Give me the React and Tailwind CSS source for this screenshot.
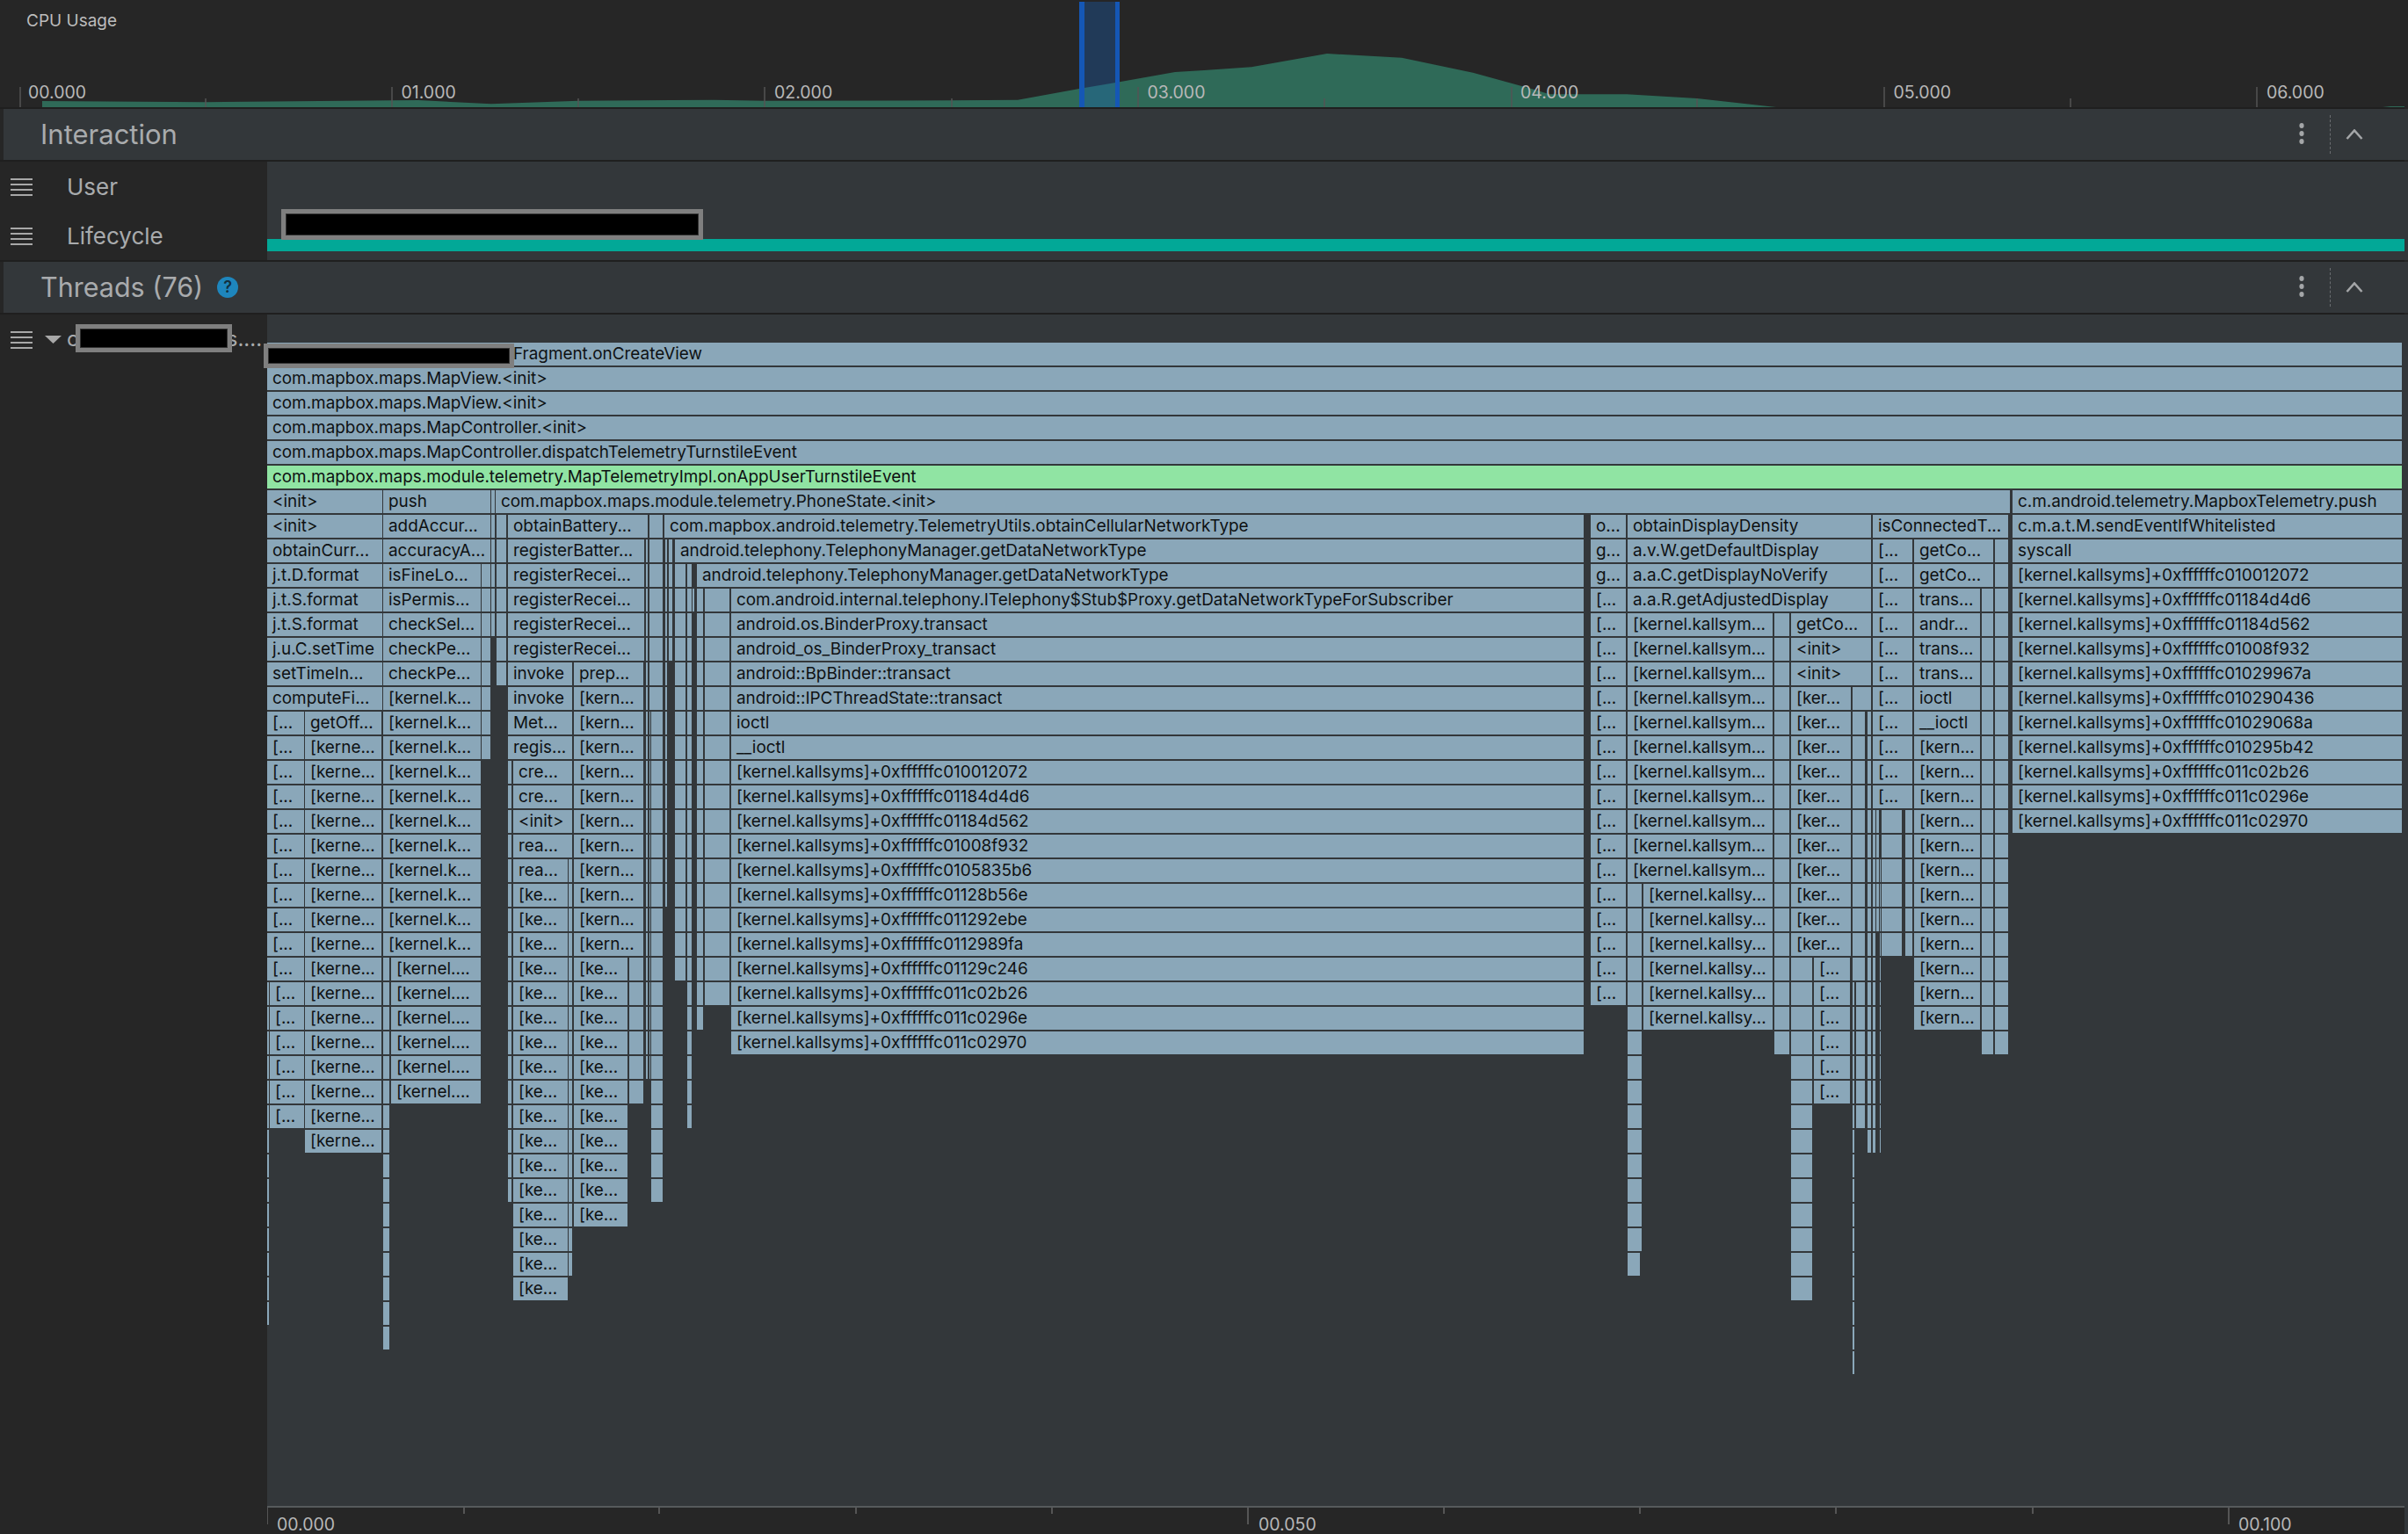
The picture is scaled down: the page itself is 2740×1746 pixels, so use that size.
import React from "react";

const K = (s) => "[kernel.kallsyms]+0xffffffc0" + s;
const rep = (t, n) => Array(n).fill(t);

// [x0, x1, firstRow, lastRow, text (string repeated or array per row)]
const COLS = [
  [304, 2733, 1, 1, "com.mapbox.maps.MapView.<init>"],
  [304, 2733, 2, 2, "com.mapbox.maps.MapView.<init>"],
  [304, 2733, 3, 3, "com.mapbox.maps.MapController.<init>"],
  [304, 2733, 4, 4, "com.mapbox.maps.MapController.dispatchTelemetryTurnstileEvent"],
  // left stacks
  [304, 435, 6, 14, ["<init>", "<init>", "obtainCurr...", "j.t.D.format", "j.t.S.format", "j.t.S.format", "j.u.C.setTime", "setTimeIn...", "computeFi..."]],
  [304, 346, 15, 25, "[..."],
  [304, 306, 26, 39, ""],
  [307, 346, 26, 31, "[..."],
  [347, 434, 15, 32, ["getOff...", ...rep("[kerne...", 17)]],
  [436, 558, 6, 8, ["push", "addAccur...", "accuracyA..."]],
  [436, 547, 9, 24, ["isFineLo...", "isPermis...", "checkSel...", "checkPe...", "checkPe...", ...rep("[kernel.k...", 11)]],
  [548, 558, 9, 16, ""],
  [436, 443, 25, 40, ""],
  [445, 547, 25, 30, "[kernel...."],
  [559, 563, 6, 11, ""],
  [564, 2287, 6, 6, "com.mapbox.maps.module.telemetry.PhoneState.<init>"],
  [565, 576, 7, 13, ""],
  [578, 737, 7, 7, "obtainBattery..."],
  [578, 733, 8, 12, ["registerBatter...", ...rep("registerRecei...", 4)]],
  [578, 651, 13, 16, ["invoke", "invoke", "Met...", "regis..."]],
  [578, 582, 17, 34, ""],
  [584, 651, 17, 20, ["cre...", "cre...", "<init>", "rea..."]],
  [584, 646, 21, 38, ["rea...", ...rep("[ke...", 17)]],
  [647, 651, 21, 37, ""],
  [653, 732, 13, 24, ["prep...", ...rep("[kern...", 11)]],
  [653, 714, 25, 35, "[ke..."],
  [716, 732, 25, 30, ""],
  [735, 737, 8, 29, ""],
  [739, 754, 7, 14, ""],
  [739, 740, 15, 29, ""],
  [741, 754, 15, 34, ""],
  [756, 1802, 7, 7, "com.mapbox.android.telemetry.TelemetryUtils.obtainCellularNetworkType"],
  [757, 759, 8, 22, ""],
  [761, 765, 8, 12, ""],
  [768, 1802, 8, 8, "android.telephony.TelephonyManager.getDataNetworkType"],
  [768, 780, 9, 25, ""],
  [782, 787, 9, 31, ""],
  [793, 1802, 9, 9, "android.telephony.TelephonyManager.getDataNetworkType"],
  [788, 790, 10, 10, ""],
  [793, 800, 10, 27, ""],
  [802, 830, 10, 26, ""],
  [832, 1802, 10, 28, [
    "com.android.internal.telephony.ITelephony$Stub$Proxy.getDataNetworkTypeForSubscriber",
    "android.os.BinderProxy.transact", "android_os_BinderProxy_transact", "android::BpBinder::transact",
    "android::IPCThreadState::transact", "ioctl", "__ioctl",
    K("10012072"), K("1184d4d6"), K("1184d562"), K("1008f932"), K("105835b6"), K("1128b56e"),
    K("11292ebe"), K("112989fa"), K("1129c246"), K("11c02b26"), K("11c0296e"), K("11c02970"),
  ]],
  // middle-right stacks
  [1810, 1850, 7, 26, ["o...", "g...", "g...", ...rep("[...", 17)]],
  [1852, 2129, 7, 10, ["obtainDisplayDensity", "a.v.W.getDefaultDisplay", "a.a.C.getDisplayNoVerify", "a.a.R.getAdjustedDisplay"]],
  [1852, 2017, 11, 21, "[kernel.kallsym..."],
  [1852, 1868, 22, 36, ""],
  [1852, 1866, 37, 37, ""],
  [1870, 2017, 22, 27, "[kernel.kallsy..."],
  [2019, 2036, 11, 28, ""],
  [2038, 2129, 11, 13, ["getCo...", "<init>", "<init>"]],
  [2038, 2106, 14, 24, "[ker..."],
  [2038, 2062, 25, 38, ""],
  [2064, 2105, 25, 30, "[..."],
  [2108, 2129, 14, 14, ""],
  [2108, 2122, 15, 25, ""],
  [2108, 2110, 26, 41, ""],
  [2112, 2122, 26, 31, ""],
  [2125, 2129, 15, 32, ""],
  [2131, 2285, 7, 7, "isConnectedT..."],
  [2131, 2176, 8, 18, "[..."],
  [2131, 2134, 19, 32, ""],
  [2135, 2138, 19, 23, ""],
  [2139, 2140, 21, 32, ""],
  [2141, 2164, 19, 24, ""],
  [2168, 2176, 19, 24, ""],
  [2178, 2268, 8, 9, "getCo..."],
  [2178, 2253, 10, 27, ["trans...", "andr...", "trans...", "trans...", "ioctl", "__ioctl", ...rep("[kern...", 12)]],
  [2255, 2268, 10, 28, ""],
  [2270, 2285, 8, 28, ""],
  [2290, 2733, 6, 19, [
    "c.m.android.telemetry.MapboxTelemetry.push", "c.m.a.t.M.sendEventIfWhitelisted", "syscall",
    K("10012072"), K("1184d4d6"), K("1184d562"), K("1008f932"), K("1029967a"), K("10290436"),
    K("1029068a"), K("10295b42"), K("11c02b26"), K("11c0296e"), K("11c02970"),
  ]],
];

function rowsFromCols() {
  const rows = [];
  for (let r = 0; r <= 41; r++) {
    const items = COLS.filter((c) => c[2] <= r && r <= c[3])
      .map((c) => ({ x0: c[0], x1: c[1], text: Array.isArray(c[4]) ? c[4][r - c[2]] : c[4] }))
      .sort((a, b) => a.x0 - b.x0);
    rows.push(items);
  }
  return rows;
}

const Bar = ({ width, children }) => (
  <div
    style={{ width }}
    className={`h-[26px] shrink-0 overflow-hidden whitespace-nowrap bg-[#8aa7b9] text-[18.9px] leading-[26px] text-[#0e1113] ${children ? "pl-[6px]" : ""}`}
  >
    {children}
  </div>
);

function FlameRow({ items }) {
  let cursor = 304;
  const out = [];
  items.forEach((it, i) => {
    const gap = it.x0 - cursor;
    if (gap > 0) out.push(<div key={"s" + i} style={{ width: gap }} className="shrink-0" />);
    out.push(<Bar key={i} width={it.x1 - it.x0}>{it.text}</Bar>);
    cursor = it.x1;
  });
  return <div className="flex h-[26px]">{out}</div>;
}

const Hamburger = () => (
  <svg width="25" height="21" viewBox="0 0 25 21" className="shrink-0">
    <g stroke="#a8a8a8" strokeWidth="2">
      <path d="M0 2H25" /><path d="M0 8H25" /><path d="M0 14H25" /><path d="M0 20H25" />
    </g>
  </svg>
);

const Redact = ({ className }) => (
  <div className={`absolute border-[5px] border-[#7f7f7f] bg-black shadow-[inset_0_0_0_1px_#333] ${className}`} />
);

const HeaderControls = () => (
  <div className="relative flex h-full items-center">
    <svg width="8" height="28" viewBox="0 0 8 28" className="ml-[2611px] shrink-0">
      <g fill="#a4a6a8">
        <ellipse cx="4" cy="4" rx="2.6" ry="3" /><ellipse cx="4" cy="13" rx="2.6" ry="3" /><ellipse cx="4" cy="22" rx="2.6" ry="3" />
      </g>
    </svg>
    <div className="ml-[28px] h-[44px] w-0 border-l border-dashed border-[#6a6d70]" />
    <svg width="20" height="12" viewBox="0 0 20 12" className="ml-[17px] shrink-0">
      <path d="M1.5 11L10 1.5L18.5 11" fill="none" stroke="#a4a6a8" strokeWidth="2.6" />
    </svg>
  </div>
);

const Sep = () => <div className="h-[2px] w-[2736px] shrink-0 bg-[#1f1f1f]" />;

const AREA = "48,122 48,115 234,116.3 446,114.3 476,114 559,118.3 658,114.7 813,113.7 870,114.7 1083,114.3 1158,113.7 1228,101 1271,93.7 1337,82 1370,80 1424,76.3 1510,61 1595,65.7 1676,82.7 1746,102 1763,107.3 1851,107.3 1931,112 2021,122";
const MAJOR = [23, 446, 870, 1295, 1720, 2144, 2568];
const MINOR = [234, 658, 1083, 1507, 1931, 2356];
const CPU_LABELS = ["00.000", "01.000", "02.000", "03.000", "04.000", "05.000", "06.000"];

const BOTTOM_TICKS = [304, 528, 750, 974, 1197, 1420, 1643, 1866, 2089, 2313, 2536];

export default function App() {
  const rows = rowsFromCols();
  return (
    <div className="relative flex h-[1746px] w-[2740px] flex-col overflow-hidden bg-[#262626] font-['Inter',sans-serif]">
      {/* CPU usage */}
      <div className="relative flex h-[122px] shrink-0 flex-col justify-between">
        <svg width="2740" height="122" viewBox="0 0 2740 122" className="absolute left-0 top-0">
          <polygon points={AREA} fill="#2f6a58" />
          <polygon points="2711,122 2720,121 2736,121 2736,122" fill="#2f6a58" />
          {MAJOR.map((x) => <line key={x} x1={x} x2={x} y1="99" y2="122" stroke="#555" strokeWidth="1.5" />)}
          {MINOR.map((x) => <line key={x} x1={x} x2={x} y1="112" y2="122" stroke="#555" strokeWidth="1.5" />)}
          <rect x="1228" y="2" width="46" height="120" fill="#1b62b8" fillOpacity="0.35" />
          <rect x="1228" y="2" width="6" height="120" fill="#1557b5" />
          <rect x="1269" y="2" width="5" height="120" fill="#1557b5" />
        </svg>
        <div className="relative ml-[30px] mt-[12px] text-[19px] leading-[24px] text-[#bcbcbc]">CPU Usage</div>
        <div className="relative mb-[5px] flex pl-[32px] text-[19.5px] leading-[24px] text-[#b8b8b8]">
          {CPU_LABELS.map((l) => <div key={l} className="w-[424.5px] shrink-0">{l}</div>)}
        </div>
      </div>
      <Sep />

      <div className="relative ml-[4px] h-[58px] shrink-0 bg-[#33373a]">
        <div className="absolute left-[42px] top-0 text-[31px] leading-[58px] text-[#a9abad]">Interaction</div>
        <HeaderControls />
      </div>
      <Sep />

      {/* tracks */}
      <div className="relative flex h-[112px] shrink-0">
        <div className="flex w-[304px] shrink-0 flex-col">
          <div className="flex h-[56px] items-center pl-[12px]">
            <Hamburger />
            <span className="ml-[39px] text-[26px] text-[#a9abad]">User</span>
          </div>
          <div className="flex h-[56px] items-center pl-[12px]">
            <Hamburger />
            <span className="ml-[39px] text-[26px] text-[#a9abad]">Lifecycle</span>
          </div>
        </div>
        <div className="flex w-[2436px] shrink-0 flex-col justify-end bg-[#33373a] pb-[10px]">
          <div className="h-[14px] w-[2432px] bg-[#02a897]" />
        </div>
        <Redact className="left-[320px] top-[54px] h-[35px] w-[480px]" />
      </div>
      <Sep />

      <div className="relative ml-[4px] h-[58px] shrink-0 bg-[#33373a]">
        <div className="absolute left-[42px] top-0 flex items-center text-[30.5px] leading-[58px] text-[#a9abad]">
          Threads (76)
          <span className="ml-[16px] flex h-[24px] w-[24px] items-center justify-center rounded-full bg-[#1e86bd] text-[18px] font-semibold leading-none text-[#12303f]">?</span>
        </div>
        <HeaderControls />
      </div>
      <Sep />

      {/* threads */}
      <div className="relative flex min-h-0 flex-1">
        <div className="w-[304px] shrink-0">
          <div className="relative flex h-[56px] items-center pl-[12px]">
            <Hamburger />
            <svg width="19" height="9" viewBox="0 0 19 9" className="ml-[14px] shrink-0">
              <path d="M0 0H19L9.5 9Z" fill="#a8a8a8" />
            </svg>
            <span className="ml-[6px] text-[24px] text-[#a9abad]">c</span>
            <span className="ml-[168px] text-[24px] leading-none text-[#a9abad]">s....</span>
          </div>
        </div>
        <div className="flex min-w-0 flex-1 flex-col">
          <div className="flex min-h-0 flex-1 flex-col gap-[2px] bg-[#33373a] pt-[32px]">
            <div className="flex h-[26px] w-[2429px] shrink-0 items-center overflow-hidden whitespace-nowrap bg-[#8aa7b9] pl-[280px] text-[18.9px] text-[#0e1113]">
              Fragment.onCreateView
            </div>
            {rows.slice(1, 5).map((items, i) => <FlameRow key={i} items={items} />)}
            <div className="flex h-[26px] w-[2429px] shrink-0 items-center overflow-hidden whitespace-nowrap bg-[#90e4a3] pl-[6px] text-[18.9px] text-[#0e1113]">
              com.mapbox.maps.module.telemetry.MapTelemetryImpl.onAppUserTurnstileEvent
            </div>
            {rows.slice(6).map((items, i) => <FlameRow key={i} items={items} />)}
          </div>
          {/* bottom ruler */}
          <div className="relative h-[32px] w-full shrink-0 border-t-2 border-[#565a5c] bg-[#262626]">
            <svg width="2432" height="20" viewBox="0 0 2432 20" className="absolute left-0 top-0">
              {BOTTOM_TICKS.map((x, i) => (
                <line key={x} x1={x - 304} x2={x - 304} y1="0" y2={i % 5 === 0 ? 19 : 7} stroke="#666" strokeWidth="1.5" />
              ))}
            </svg>
            <div className="absolute left-0 top-[9px] flex pl-[11px] text-[19.5px] leading-[20px] text-[#b8b8b8]">
              <div className="w-[1117px] shrink-0">00.000</div>
              <div className="w-[1115px] shrink-0">00.050</div>
              <div>00.100</div>
            </div>
          </div>
        </div>
        <div className="w-[4px] shrink-0 bg-[#33373a]" />
        <Redact className="left-[86px] top-[11px] h-[32px] w-[178px]" />
        <Redact className="left-[300px] top-[33px] h-[28px] w-[285px]" />
      </div>
    </div>
  );
}
